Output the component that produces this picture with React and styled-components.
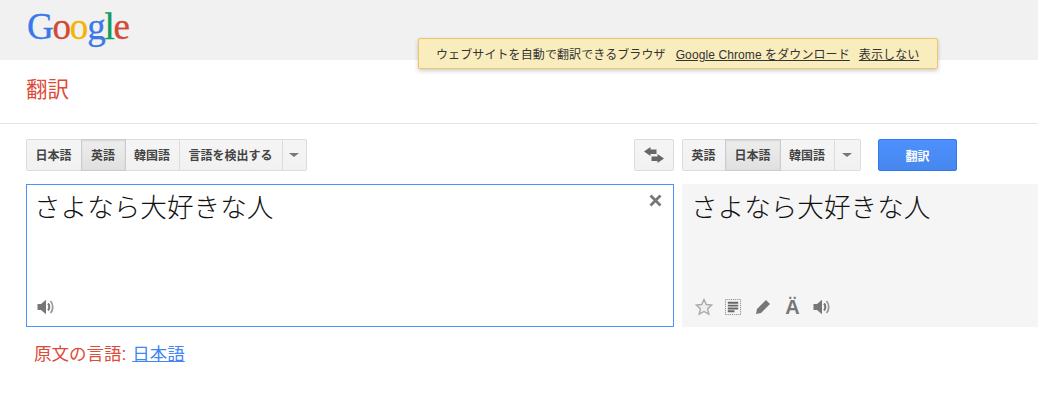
import styled, { createGlobalStyle } from "styled-components";

const GlobalStyle = createGlobalStyle`
  html, body {
    margin: 0;
    padding: 0;
    background: #fff;
    font-family: "Liberation Sans", "Noto Sans CJK JP", sans-serif;
  }
`;

const Page = styled.div`
  position: relative;
  width: 1038px;
  height: 409px;
  overflow: hidden;
`;

const TopBar = styled.header`
  height: 60px;
  background: #f1f1f1;
  padding: 0 0 0 27px;
  box-sizing: border-box;
`;

const Logo = styled.div`
  font-family: "Liberation Serif", serif;
  font-size: 37px;
  line-height: 44px;
  letter-spacing: -1.2px;
  padding-top: 5px;
  -webkit-text-stroke: 0.3px currentColor;
`;

const Letter = styled.span`
  color: ${(props) => props.color};
`;

const Notice = styled.div`
  position: absolute;
  left: 418px;
  top: 38px;
  width: 520px;
  height: 31px;
  box-sizing: border-box;
  background: #f9edbe;
  border: 1px solid #f0c36d;
  border-radius: 2px;
  box-shadow: 0 2px 4px rgba(0, 0, 0, 0.2);
  display: flex;
  align-items: center;
  padding-left: 17px;
  font-size: 12px;
  letter-spacing: 0.1px;
  color: #333;
  white-space: nowrap;
`;

const NoticeLink = styled.a`
  color: #333;
  text-decoration: underline;
  margin-left: ${(props) => props.gap}px;
`;

const TitleBar = styled.div`
  height: 64px;
  box-sizing: border-box;
  border-bottom: 1px solid #e5e5e5;
  padding: 15px 0 0 26px;
  font-size: 21.5px;
  line-height: 30px;
  color: #dd4b39;
`;

const Toolbar = styled.div`
  display: flex;
  margin-top: 15px;
  padding-left: 26px;
  height: 32px;
`;

const Group = styled.div`
  display: flex;
  margin-left: ${(props) => props.gap || 0}px;
`;

const Btn = styled.button`
  width: ${(props) => props.w}px;
  height: 32px;
  box-sizing: border-box;
  margin: 0 0 0 -1px;
  padding: 0 1px 1px 0;
  display: flex;
  align-items: center;
  justify-content: center;
  font-family: inherit;
  font-size: 12px;
  font-weight: 700;
  color: #444;
  border: 1px solid ${(props) => (props.active ? "#ccc" : "#dcdcdc")};
  border-radius: ${(props) => props.radius || "0"};
  background: ${(props) =>
    props.active
      ? "linear-gradient(#eeeeee, #e0e0e0)"
      : "linear-gradient(#f5f5f5, #f1f1f1)"};
  box-shadow: ${(props) =>
    props.active ? "inset 0 1px 2px rgba(0,0,0,0.1)" : "none"};
  position: ${(props) => (props.active ? "relative" : "static")};
  z-index: ${(props) => (props.active ? 1 : 0)};
`;

const Caret = styled.span`
  width: 0;
  height: 0;
  border-left: 5px solid transparent;
  border-right: 5px solid transparent;
  border-top: 4px solid #777;
  margin-top: 1px;
`;

const TranslateBtn = styled.button`
  width: 79px;
  height: 32px;
  margin: 0 0 0 17px;
  padding: 0;
  box-sizing: border-box;
  font-family: inherit;
  font-size: 12px;
  font-weight: 700;
  color: #fff;
  border: 1px solid #3079ed;
  border-radius: 2px;
  background: linear-gradient(#4d90fe, #4787ed);
`;

const Panels = styled.div`
  display: flex;
  margin-top: 13px;
  padding-left: 26px;
`;

const Source = styled.div`
  position: relative;
  width: 648px;
  height: 143px;
  box-sizing: border-box;
  border: 1px solid #4d90fe;
  display: flex;
  flex-direction: column;
  justify-content: space-between;
  padding: 3px 7px 9px;
`;

const Result = styled.div`
  margin-left: 8px;
  width: 356px;
  height: 143px;
  box-sizing: border-box;
  background: #f5f5f5;
  display: flex;
  flex-direction: column;
  justify-content: space-between;
  padding: 4px 11px 10px 9px;
`;

const BigText = styled.div`
  font-family: "Noto Sans CJK JP", sans-serif;
  font-size: 26.6px;
  font-weight: 300;
  line-height: 36px;
  color: #111;
`;

const Clear = styled.svg`
  position: absolute;
  right: 11px;
  top: 9px;
  width: 13px;
  height: 13px;
`;

const IconRow = styled.div`
  display: flex;
  align-items: center;
  gap: ${(props) => props.gap || 0}px;
  height: 20px;
  padding-left: ${(props) => props.inset || 0}px;
`;

const Icon = styled.svg`
  width: ${(props) => props.size || 18}px;
  height: ${(props) => props.size || 18}px;
  display: block;
  flex: none;
`;

const Umlaut = styled.span`
  font-size: 20px;
  font-weight: 700;
  line-height: 20px;
  color: #777;
  width: 17px;
  text-align: center;
`;

const Detected = styled.div`
  padding: 14px 0 0 34px;
  font-size: 17.5px;
  line-height: 26px;
  color: #dd4b39;
`;

const DetectedLink = styled.a`
  color: #4285f4;
  text-decoration: underline;
  margin-left: 1px;
`;

function Speaker() {
  return (
    <Icon viewBox="0 0 18 18">
      <path d="M0.500 6h3.500L9 1.800v14.400L4 12H0.500z" fill="#777" />
      <path d="M11 5.500c1.700 1.800 1.700 5.200 0 7" fill="none" stroke="#777" strokeWidth="2" />
      <path d="M13.500 3c3 3.200 3 8.800 0 12" fill="none" stroke="#999" strokeWidth="1.800" />
    </Icon>
  );
}

const google = [
  ["G", "#3b78e7"],
  ["o", "#d34836"],
  ["o", "#f4b400"],
  ["g", "#3b78e7"],
  ["l", "#0f9d58"],
  ["e", "#d34836"],
];

export default function App() {
  return (
    <Page>
      <GlobalStyle />
      <TopBar>
        <Logo>
          {google.map(([ch, color], i) => (
            <Letter key={i} color={color}>{ch}</Letter>
          ))}
        </Logo>
      </TopBar>
      <Notice>
        ウェブサイトを自動で翻訳できるブラウザ
        <NoticeLink gap={10}>Google Chrome をダウンロード</NoticeLink>
        <NoticeLink gap={9}>表示しない</NoticeLink>
      </Notice>
      <TitleBar>翻訳</TitleBar>
      <Toolbar>
        <Group gap={1}>
          <Btn w={56} radius="2px 0 0 2px">日本語</Btn>
          <Btn w={45} active>英語</Btn>
          <Btn w={55}>韓国語</Btn>
          <Btn w={104}>言語を検出する</Btn>
          <Btn w={25} radius="0 2px 2px 0"><Caret /></Btn>
        </Group>
        <Group gap={328}>
          <Btn w={40} radius="2px">
            <Icon viewBox="0 0 20 16" size={20}>
              <path d="M0 4.500l6.500-4.500v2.500h6v4.500h-6V9z" fill="#666" />
              <path d="M20 11.500l-6.500-4.500v2.500h-6V14h6v2z" fill="#666" />
            </Icon>
          </Btn>
        </Group>
        <Group gap={9}>
          <Btn w={44} radius="2px 0 0 2px">英語</Btn>
          <Btn w={56} active>日本語</Btn>
          <Btn w={55}>韓国語</Btn>
          <Btn w={27} radius="0 2px 2px 0"><Caret /></Btn>
        </Group>
        <TranslateBtn>翻訳</TranslateBtn>
      </Toolbar>
      <Panels>
        <Source>
          <BigText>さよなら大好きな人</BigText>
          <Clear viewBox="0 0 13 13">
            <path d="M1.500 1.500l10 10M11.500 1.500l-10 10" stroke="#777" strokeWidth="2.800" />
          </Clear>
          <IconRow inset={3}><Speaker /></IconRow>
        </Source>
        <Result>
          <BigText>さよなら大好きな人</BigText>
          <IconRow gap={12} inset={4}>
            <Icon viewBox="0 0 18 18">
              <path d="M9 1.500l2.300 5 5.400.6-4 3.700 1.100 5.400L9 13.500l-4.800 2.700 1.100-5.400-4-3.700 5.400-.6z" fill="#eee" stroke="#aaa" strokeWidth="1.400" />
            </Icon>
            <Icon viewBox="0 0 18 18" size={17}>
              <rect x="0.500" y="0.500" width="16" height="16" fill="none" stroke="#777" strokeDasharray="1 1" />
              <path d="M3 4h11M3 7h11M3 10h11M3 13h7" stroke="#666" strokeWidth="2" />
            </Icon>
            <Icon viewBox="0 0 18 18">
              <path d="M2 16l1-5L12 2l4 4-9 9z" fill="#777" />
            </Icon>
            <Umlaut>Ä</Umlaut>
            <Speaker />
          </IconRow>
        </Result>
      </Panels>
      <Detected>
        原文の言語: <DetectedLink>日本語</DetectedLink>
      </Detected>
    </Page>
  );
}
